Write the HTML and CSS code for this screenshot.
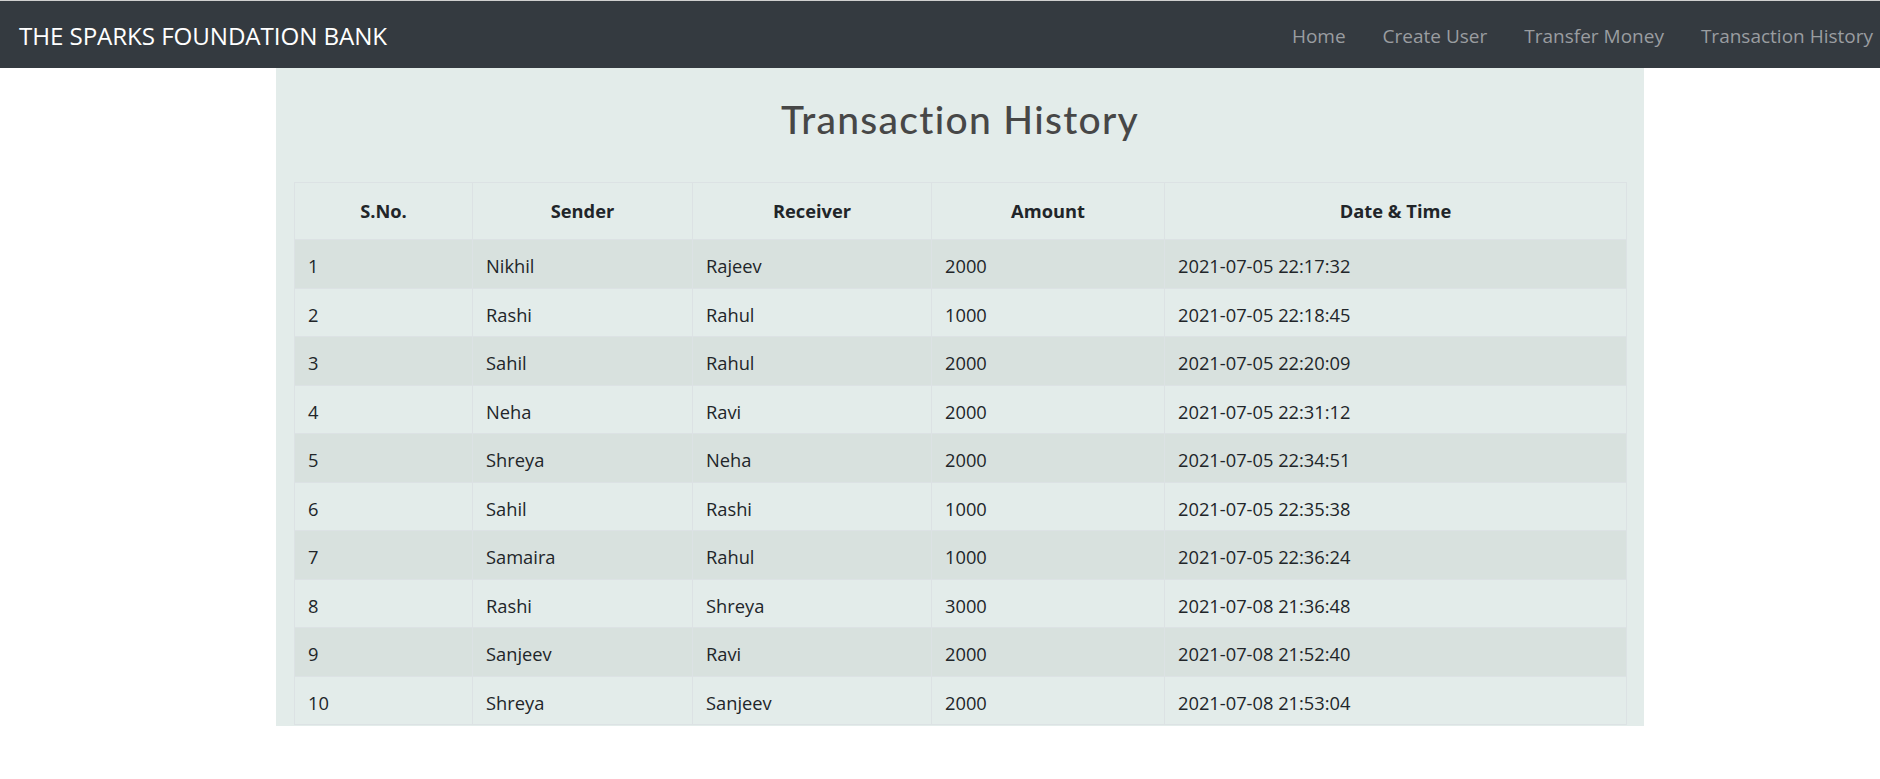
FILE: index.html
```html
<!DOCTYPE html>
<html lang="en">
<head>
<meta charset="utf-8">
<title>Transaction History</title>
<link rel="stylesheet" href="styles.css">
</head>
<body>
<nav class="navbar">
  <a class="brand" href="#">THE SPARKS FOUNDATION BANK</a>
  <ul class="nav-links">
    <li><a href="#">Home</a></li>
    <li><a href="#">Create User</a></li>
    <li><a href="#">Transfer Money</a></li>
    <li><a href="#">Transaction History</a></li>
  </ul>
</nav>
<main class="container">
  <h2 class="title">Transaction History</h2>
  <table class="history">
    <colgroup>
      <col class="c1"><col class="c2"><col class="c3"><col class="c4"><col class="c5">
    </colgroup>
    <thead>
      <tr><th>S.No.</th><th>Sender</th><th>Receiver</th><th>Amount</th><th>Date &amp; Time</th></tr>
    </thead>
    <tbody>
      <tr><td>1</td><td>Nikhil</td><td>Rajeev</td><td>2000</td><td>2021-07-05 22:17:32</td></tr>
      <tr><td>2</td><td>Rashi</td><td>Rahul</td><td>1000</td><td>2021-07-05 22:18:45</td></tr>
      <tr><td>3</td><td>Sahil</td><td>Rahul</td><td>2000</td><td>2021-07-05 22:20:09</td></tr>
      <tr><td>4</td><td>Neha</td><td>Ravi</td><td>2000</td><td>2021-07-05 22:31:12</td></tr>
      <tr><td>5</td><td>Shreya</td><td>Neha</td><td>2000</td><td>2021-07-05 22:34:51</td></tr>
      <tr><td>6</td><td>Sahil</td><td>Rashi</td><td>1000</td><td>2021-07-05 22:35:38</td></tr>
      <tr><td>7</td><td>Samaira</td><td>Rahul</td><td>1000</td><td>2021-07-05 22:36:24</td></tr>
      <tr><td>8</td><td>Rashi</td><td>Shreya</td><td>3000</td><td>2021-07-08 21:36:48</td></tr>
      <tr><td>9</td><td>Sanjeev</td><td>Ravi</td><td>2000</td><td>2021-07-08 21:52:40</td></tr>
      <tr><td>10</td><td>Shreya</td><td>Sanjeev</td><td>2000</td><td>2021-07-08 21:53:04</td></tr>
    </tbody>
  </table>
</main>
</body>
</html>
```
FILE: styles.css
```css
* { box-sizing: border-box; }

html, body {
  margin: 0;
  padding: 0;
  background: #ffffff;
}

body {
  border-top: 1px solid #cfcfcf;
  font-family: "Open Sans", "Noto Sans", sans-serif;
  color: #212529;
  overflow: hidden;
}

.navbar {
  height: 67px;
  background: #343a40;
  display: flex;
  align-items: center;
  justify-content: space-between;
  padding: 2px 7px 0 19px;
}

.brand {
  color: #ffffff;
  text-decoration: none;
  font-size: 24.2px;
  line-height: 30px;
  letter-spacing: -0.1px;
}

.nav-links {
  list-style: none;
  margin: 0;
  padding: 0;
  display: flex;
  gap: 37px;
}

.nav-links a {
  color: #9a9da0;
  text-decoration: none;
  font-size: 19px;
  line-height: 26px;
}

.container {
  margin-left: 276px;
  width: 1368px;
  background: #e3ecea;
  padding: 28px 18px 1px;
}

.title {
  margin: 0;
  text-align: center;
  font-family: "Lato", "Open Sans", sans-serif;
  font-weight: 500;
  font-size: 39px;
  line-height: 46px;
  color: #474747;
  letter-spacing: 1.3px;
}

.history {
  margin-top: 40px;
  width: 1332px;
  table-layout: fixed;
  border-collapse: collapse;
  border: 1px solid #dce2e4;
  font-size: 18.3px;
  line-height: 24px;
}

.c1 { width: 178px; }
.c2 { width: 220px; }
.c3 { width: 239px; }
.c4 { width: 233px; }
.c5 { width: 462px; }

.history th,
.history td {
  border: 1px solid #dce2e4;
  text-align: left;
  vertical-align: top;
}

.history th {
  padding: 16px 13px;
  text-align: center;
  font-weight: 700;
  color: #212529;
}

.history td {
  padding: 14px 13px 9.5px;
  font-weight: 400;
  color: #212529;
}

.history tbody tr:nth-child(odd) {
  background: #d8e1de;
}
```
